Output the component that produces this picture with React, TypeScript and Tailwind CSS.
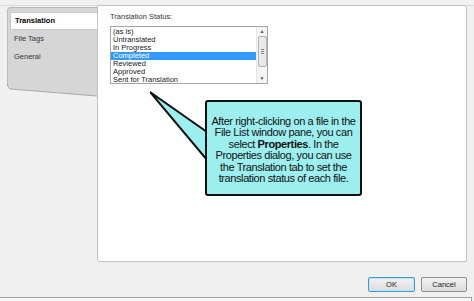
import React from 'react';

const statuses = ['(as is)', 'Untranslated', 'In Progress', 'Completed', 'Reviewed', 'Approved', 'Sent for Translation'];
const tabs = ['Translation', 'File Tags', 'General'];

const Callout: React.FC = () => (
  <div className="absolute left-[52px] top-[85px] w-[270px] h-[120px]">
    <svg className="absolute left-0 top-0" width="60" height="100" viewBox="0 0 60 100">
      <polygon points="0,1 57,41 57,69" fill="#9cefee" stroke="#111" strokeWidth="2" strokeLinejoin="miter" />
    </svg>
    <div className="absolute left-[55px] top-[9px] w-[157px] h-[96px] rounded-[3px] border-2 border-[#111] bg-[#9cefee] flex items-center justify-center pt-[4px]">
      <p className="text-center text-[11px] leading-[11.5px] tracking-[-0.4px] whitespace-nowrap text-[#111] font-['Liberation_Sans',Arial,sans-serif]">
        After right-clicking on a file in the
        <br />
        File List window pane, you can
        <br />
        select <b>Properties</b>. In the
        <br />
        Properties dialog, you can use
        <br />
        the Translation tab to set the
        <br />
        translation status of each file.
      </p>
    </div>
  </div>
);

export default function App() {
  return (
    <div className="w-[474px] h-[301px] bg-[#f0f0f0] flex flex-col overflow-hidden font-['Liberation_Sans',Arial,sans-serif] text-[#222]">
      <div className="h-[6px] shrink-0 border-b border-[#dadada]" />
      <div className="flex pl-[7px] h-[256px]">
        <div className="w-[90px] flex flex-col pt-px">
          <div className="h-[76px] bg-[#d6d6d6] border-l border-t border-[#b9b9b9] rounded-tl-[4px] pt-[4px] flex flex-col">
            {tabs.map((t, i) =>
              i === 0 ? (
                <div key={t} className="ml-[2px] h-[18px] bg-white border-y border-l border-[#c8c8c8] flex items-center pl-[4px] text-[7.5px] font-bold text-black">
                  {t}
                </div>
              ) : (
                <div key={t} className="h-[18px] flex items-center pl-[6px] text-[7.5px] text-[#333]">
                  {t}
                </div>
              )
            )}
          </div>
          <svg width="90" height="14" viewBox="0 0 90 14" className="block">
            <path d="M0 0 L0 1 Q1 6 4 6 L90 13 L90 0 Z" fill="#d6d6d6" />
            <path d="M0.5 0 L0.5 1 Q1 6 4 6 L90 13" fill="none" stroke="#a9a9a9" strokeWidth="1" />
          </svg>
        </div>
        <div className="relative w-[370px] bg-white border border-[#c2c2c2] rounded-tr-[3px] rounded-bl-[3px] -mt-px pl-[12px] pt-[6px]">
          <div className="text-[7.5px] leading-[10px] text-[#333]">Translation Status:</div>
          <div className="mt-[4px] w-[158px] h-[58px] border border-[#a6a6a6] flex bg-white">
            <div className="flex-1 pt-px">
              {statuses.map((s, i) => (
                <div
                  key={s}
                  className={`h-[8px] leading-[8px] pl-[2px] text-[7.5px] ${i === 3 ? 'bg-[#3399ff] text-white' : 'text-[#222]'}`}
                >
                  {s}
                </div>
              ))}
            </div>
            <div className="w-[11px] bg-[#f4f4f4] border-l border-[#e6e6e6] flex flex-col items-center">
              <div className="h-[9px] flex items-center text-[5px] text-[#555]">▲</div>
              <div className="w-[9px] h-[31px] bg-[#e9e9e9] border border-[#b3b3b3] rounded-[2px] flex items-center justify-center">
                <div className="w-[3px] h-[5px] border-y border-[#888] flex flex-col justify-center">
                  <div className="h-px bg-[#888]" />
                </div>
              </div>
              <div className="flex-1" />
              <div className="h-[9px] flex items-center text-[5px] text-[#555]">▼</div>
            </div>
          </div>
          <Callout />
        </div>
      </div>
      <div className="flex justify-end gap-[6px] pr-[7px] mt-[15px]">
        <button className="w-[47px] h-[15px] rounded-[2px] border border-[#3c9ad6] bg-gradient-to-b from-[#f2f2f2] to-[#dcdcdc] text-[7.5px] text-[#222] shadow-[inset_0_0_0_1px_#bfe3f7]">
          OK
        </button>
        <button className="w-[46px] h-[15px] rounded-[2px] border border-[#8e8e8e] bg-gradient-to-b from-[#f2f2f2] to-[#dcdcdc] text-[7.5px] text-[#222]">
          Cancel
        </button>
      </div>
      <div className="mt-auto h-[4px] flex">
        <div className="w-[471px] border-t border-[#a0a0a0] bg-[#f7f7f7]" />
        <div className="flex-1 border-l border-[#a0a0a0]" />
      </div>
    </div>
  );
}
